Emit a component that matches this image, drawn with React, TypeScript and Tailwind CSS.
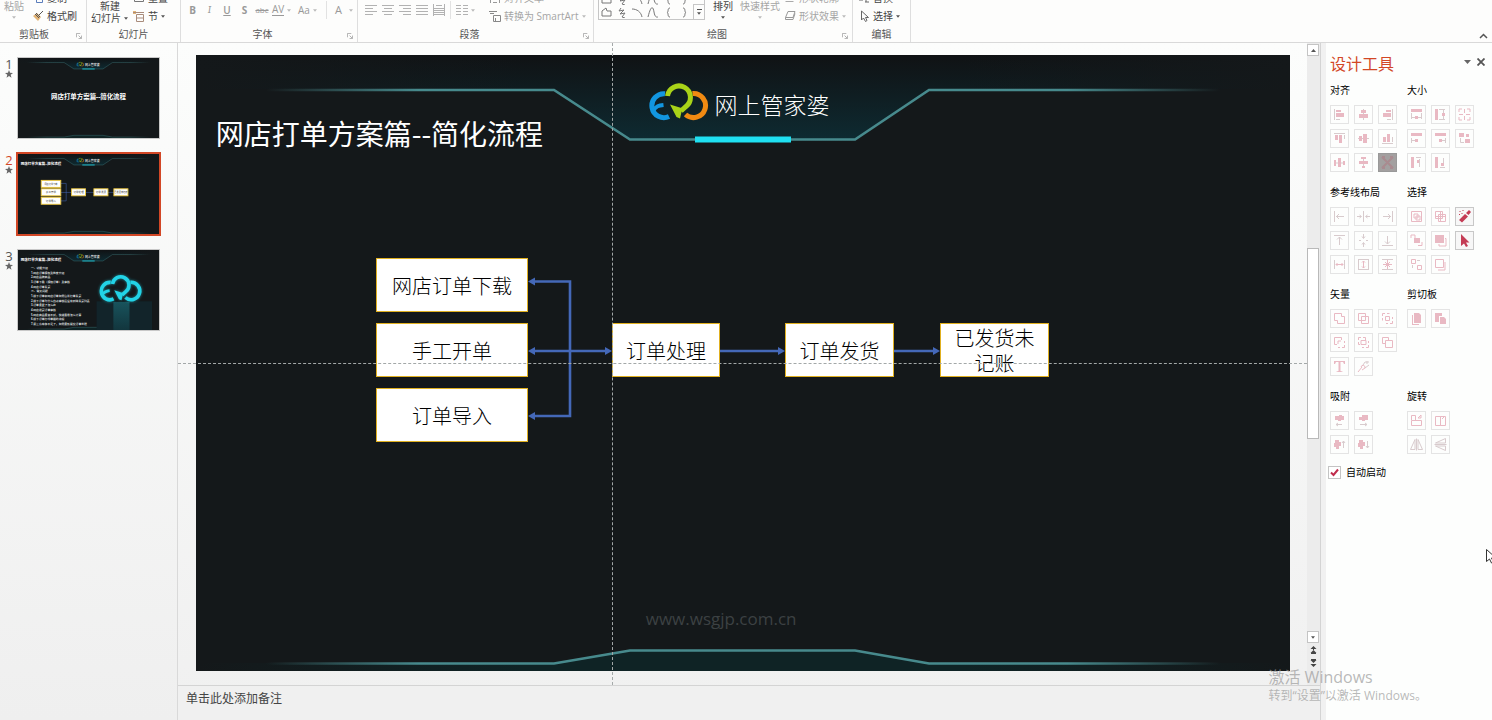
import type { ReactNode } from "react";

type Glyph = { fill?: string; line?: string; gray?: string; strong?: boolean; active?: boolean };
type Tool = { name: string; icon: Glyph };
type ToolSection = { title: string; narrow?: boolean; tools: Tool[] };

const SLIDE_W = 1094;
const SLIDE_H = 616;

const nodes = [
  { text: "网店订单下载", x: 180, y: 203, w: 152, h: 54 },
  { text: "手工开单", x: 180, y: 268, w: 152, h: 54 },
  { text: "订单导入", x: 180, y: 333, w: 152, h: 54 },
  { text: "订单处理", x: 416, y: 268, w: 108, h: 54 },
  { text: "订单发货", x: 589, y: 268, w: 109, h: 54 },
  { text: "已发货未记账", x: 744, y: 268, w: 109, h: 54 },
];

const outline = [
  "一、功能介绍",
  "1.网店订单授权及检查介绍",
  "2.网店品牌商品",
  "3.订单下载（授权订单）及审核",
  "4.网店订单发货",
  "二、常见问题",
  "1.线下订单和网店订单如何合并打单发货",
  "2.线下订单为什么自动审核后没有到待发货列表",
  "3.订单重复了怎么办",
  "4.网店退货订单审核",
  "5.网店商品重量不对，快递费用怎么计算",
  "6.线下订单打印单据的流程",
  "7.第三方库存不足了，如何重新提交订单处理",
];

const sections: ToolSection[] = [
  {
    title: "对齐",
    tools: [
      { name: "左对齐", icon: { fill: "M6 5h5v2H6zM6 8h8v4H6z", gray: "M4.5 4v11M6 14.5h4" } },
      { name: "水平居中", icon: { fill: "M7 5h5v3H7zM5 9h9v4H5z", gray: "M9.5 4v11" } },
      { name: "右对齐", icon: { fill: "M8 5h5v2H8zM5 8h8v4H5z", gray: "M14.5 4v11M9 14.5h4" } },
      { name: "顶端对齐", icon: { fill: "M5 6h3v5H5zM9 6h3v8H9z", gray: "M4 4.5h11M14.5 6v4" } },
      { name: "垂直居中", icon: { fill: "M5 7h3v5H5zM9 5h4v9H9z", gray: "M4 9.5h11" } },
      { name: "底端对齐", icon: { fill: "M5 8h3v5H5zM9 5h3v8H9z", gray: "M4 14.5h11M14.5 8v5" } },
      { name: "横向分布", icon: { fill: "M4 7h2v6H4zM8 5h3v9H8zM13 8h2v4h-2z", gray: "M6 10h7" } },
      { name: "纵向分布", icon: { fill: "M7 4h5v2H7zM5 8h9v3H5zM8 13h3v2H8z", gray: "M9.5 6v8" } },
      { name: "对齐基准", icon: { line: "M4 4l11 11M15 4L4 15M4 4h3M12 4h3M4 15h3M12 15h3", active: true } },
    ],
  },
  {
    title: "大小",
    tools: [
      { name: "等宽", icon: { fill: "M4 4h11v3H4zM8 11h3v3H8z", gray: "M4.5 8v6M14.5 8v6M5 12.5h9" } },
      { name: "等高", icon: { fill: "M4 4h3v11H4zM11 8h3v3h-3z", gray: "M8 4.5h6M8 14.5h6M12.5 5v9" } },
      { name: "等大小", icon: { line: "M4 7V4h3M12 4h3v3M15 12v3h-3M7 15H4v-3M9.5 4v4M9.5 11v4M4 9.5h4M11 9.5h4" } },
      { name: "左侧拉伸", icon: { fill: "M4 4h11v3H4zM8 10h3v3H8z", gray: "M4.5 9v5M5 11.5h5" } },
      { name: "右侧拉伸", icon: { fill: "M4 4h11v3H4zM8 10h3v3H8z", gray: "M14.5 9v5M9 11.5h5" } },
      { name: "互换", icon: { fill: "M4 4h5v4H4zM10 10h5v4h-5zM11 5h3v3h-3z", gray: "M5.5 9v4.5H9" } },
      { name: "顶部拉伸", icon: { fill: "M4 4h3v11H4zM10 7h2v3h-2z", gray: "M9 4.5h5M12.5 6v8" } },
      { name: "底部拉伸", icon: { fill: "M4 4h3v11H4zM10 10h3v3h-3z", gray: "M9 14.5h5M12.5 5v6" } },
    ],
  },
  {
    title: "参考线布局",
    tools: [
      { name: "左参考线", icon: { gray: "M4.5 4v11M6 9.5h8M9 7L6.5 9.5L9 12" } },
      { name: "垂直参考线", icon: { gray: "M9.5 4v11M3 9.5h4M12 9.5h4M5.5 8l2 1.5l-2 1.5M13.5 8l-2 1.5l2 1.5" } },
      { name: "右参考线", icon: { gray: "M14.5 4v11M5 9.5h8M10 7l2.5 2.5L10 12" } },
      { name: "上参考线", icon: { gray: "M4 4.5h11M9.5 6v8M7 8.5L9.5 6L12 8.5" } },
      { name: "水平参考线", icon: { gray: "M5 9.5h2M12 9.5h2M9.5 3v4M9.5 12v4M8 5.5l1.5 2l1.5-2M8 13.5l1.5-2l1.5 2" } },
      { name: "下参考线", icon: { gray: "M4 14.5h11M9.5 5v8M7 10.5l2.5 2.5l2.5-2.5" } },
      { name: "左右参考线", icon: { line: "M6 9.5h7M7.5 8L6 9.5L7.5 11M11.5 8L13 9.5L11.5 11", gray: "M4.5 5v9M14.5 5v9" } },
      { name: "上下参考线", icon: { line: "M9.5 6v7M8 7.5L9.5 6L11 7.5M8 11.5l1.5 1.5l1.5-1.5", gray: "M4 4.5h11M4 14.5h11M4.5 5v9M14.5 5v9" } },
      { name: "四周参考线", icon: { line: "M9.5 5v9M5 9.5h9M7 7l5 5M12 7l-5 5", gray: "M4 4.5h11M4 14.5h11" } },
    ],
  },
  {
    title: "选择",
    tools: [
      { name: "组合", icon: { line: "M4.5 4.5h10v10h-10zM7 7h4v4H7zM9 9h4v4H9z" } },
      { name: "取消组合", icon: { line: "M4.5 4.5h7v7h-7zM7.5 7.5h7v7h-7zM4 9.5h11M9.5 4v11" } },
      { name: "魔棒", icon: { fill: "M4 13l6-6l3 2.5l-6 6zM11 6l3-3l2 2l-2.5 3z", line: "M5 4v1M8 3v1M4 7.5h1M7 6v1", strong: true } },
      { name: "选择相同", icon: { fill: "M7 7h6v5H7z", line: "M4 7V4h4v3M11 14.5h4V11" } },
      { name: "置于顶层", icon: { fill: "M4 4h9v8H4z", line: "M14 7.5h1v7.5H8v-2" } },
      { name: "选择", icon: { fill: "M6 3v12l3-2.5l2 3.5l2-1l-2-3.5h3.5z", strong: true } },
      { name: "选择相似", icon: { line: "M4.5 4.5h4v4h-4zM10.5 10.5h4v4h-4z", gray: "M10 5.5h3M5.5 10v3" } },
      { name: "置于底层", icon: { line: "M4.5 4.5h8v8h-8zM14 7v8H7" } },
    ],
  },
  {
    title: "矢量",
    tools: [
      { name: "联合", icon: { line: "M4.5 4.5h7v3h3v7h-7v-3h-3z" } },
      { name: "组合形状", icon: { line: "M4.5 4.5h7v7h-7zM7.5 7.5h7v7h-7z" } },
      { name: "相交", icon: { line: "M7.5 7.5h4v4h-4zM4.5 7V4.5H7M9 4.5h2.5M4.5 9v2.5M14.5 12v2.5H12M14.5 8v2M8 14.5h2" } },
      { name: "剪除", icon: { line: "M7 11.5H4.5v-7h7V7M8 8h3M8 8v3M14.5 8v2M14.5 12v2.5H12M8 14.5h2" } },
      { name: "拆分", icon: { line: "M4.5 7V4.5H7M9 4.5h2.5V7M7 7.5h5v4H7zM4.5 9v2.5H6M14.5 8v2M14.5 12v2.5H12M8 14.5h2" } },
      { name: "重叠", icon: { line: "M7 10.5H4.5v-6h6V7M7.5 7.5h7v7h-7z" } },
      { name: "文字矢量", icon: { fill: "M4 4h11v3h-1l-1-2h-2.5v9l2 .5v.5h-6v-.5l2-.5V5H6L5 7H4z" } },
      { name: "编辑顶点", icon: { line: "M4 15l4-5M7 10a2 2 0 1 1 4 1l-3 2", gray: "M9 8l2-3h4M11 11l4-3M13 4v3" } },
    ],
  },
  {
    title: "剪切板",
    tools: [
      { name: "复制多个", icon: { fill: "M7 4h5l2 2v8H7zM5 6h1v9h6v1H5z" } },
      { name: "粘贴多个", icon: { fill: "M4 4h7v3H8v6H4zM9 8h4l2 2v5H9z" } },
    ],
  },
  {
    title: "吸附",
    narrow: true,
    tools: [
      { name: "向左吸附", icon: { fill: "M5 5h4v-1h3v1h2v4h-3v1H8V9H5z", gray: "M6 13.5h6M8 12l-2 1.5l2 1.5" } },
      { name: "向右吸附", icon: { fill: "M5 6h3V4h6v5h-3v1H8V9H5z", gray: "M6 13.5h7M11 12l2 1.5l-2 1.5" } },
      { name: "向上吸附", icon: { fill: "M5 5h4v2h2v4H9v3H6v-2H4V8h1z", gray: "M13.5 6v7M12 8l1.5-2L15 8" } },
      { name: "向下吸附", icon: { fill: "M5 5h4v2h2v4H9v3H6v-2H4V8h1z", gray: "M13.5 6v7M12 11l1.5 2l1.5-2" } },
    ],
  },
  {
    title: "旋转",
    narrow: true,
    tools: [
      { name: "向左旋转", icon: { line: "M4.5 9.5h10v5h-10zM4.5 9V4.5h4v5M11 7h3V4M11 7l3-3" } },
      { name: "向右旋转", icon: { line: "M4.5 5.5h5v9h-5zM9.5 5.5h5v9h-5zM11 8l3-3" } },
      { name: "水平翻转", icon: { gray: "M9.5 3.5v12M8 4.5L3.5 14.5H8zM11 4.5l4.5 10H11z" } },
      { name: "垂直翻转", icon: { gray: "M3.5 9.5h12M4.5 8l10-4.5V8zM4.5 11l10 4.5V11z" } },
    ],
  },
];

function Logo({ mono, x, y, width }: { mono?: boolean; x: number; y: number; width: number }) {
  const green = mono ? "#22d3e6" : "#a9d318";
  return (
    <svg x={x} y={y} width={width} height={(width * 38) / 61} viewBox="0 0 61 38" fill="none" strokeWidth="5">
      <g stroke={mono ? "#22d3e6" : "#1296e0"}>
        <path d="M16 10.7A12 12 0 1 0 20 33.500" />
        <path d="M4 28C7 23 10 22.500 14.500 22" strokeWidth="4" />
      </g>
      <g stroke={mono ? "#22d3e6" : "#f08a12"}>
        <path d="M43.500 10.600A12 12 0 1 1 36.500 31.500" />
      </g>
      <path d="M18.500 13A11.500 11.500 0 1 1 37 23.500L32 28" stroke={green} />
      <path d="M21 21.500L34 25.500L32.500 29L31 35.500L27.500 34z" fill={green} />
    </svg>
  );
}

function Backdrop({ id, brand, children }: { id: string; brand?: boolean; children?: ReactNode }) {
  return (
    <svg className="block h-full w-full" viewBox={`0 0 ${SLIDE_W} ${SLIDE_H}`} preserveAspectRatio="none" aria-hidden="true">
      <defs>
        <linearGradient id={`${id}-line`} gradientUnits="userSpaceOnUse" x1="70" x2="1024" y1="0" y2="0">
          <stop offset="0" stopColor="#4b8f92" stopOpacity="0" />
          <stop offset=".16" stopColor="#478a8d" />
          <stop offset=".84" stopColor="#478a8d" />
          <stop offset="1" stopColor="#4b8f92" stopOpacity="0" />
        </linearGradient>
        <linearGradient id={`${id}-glow`} x1="0" x2="0" y1="0" y2="1">
          <stop offset="0" stopColor="#101214" />
          <stop offset="1" stopColor="#0e2a31" />
        </linearGradient>
        <linearGradient id={`${id}-side`} x1="0" x2="1" y1="0" y2="0">
          <stop offset="0" stopColor="#14181a" />
          <stop offset=".3" stopColor="#14181a" stopOpacity="0" />
          <stop offset=".7" stopColor="#14181a" stopOpacity="0" />
          <stop offset="1" stopColor="#14181a" />
        </linearGradient>
      </defs>
      <rect width={SLIDE_W} height={SLIDE_H} fill="#14181a" />
      <path d="M0 0H1094V34H733L659 84H434L358 34H0z" fill={`url(#${id}-glow)`} />
      <path d="M0 616V608H358L434 595H659L733 608H1094V616z" fill="#0f2325" />
      <path d="M0 0H1094V90H0zM0 590H1094V616H0z" fill={`url(#${id}-side)`} />
      <g fill="none" stroke={`url(#${id}-line)`} strokeWidth="2.600">
        <path d="M70 35H358L434 84.500H659L733 35H1024" />
        <path d="M70 608.500H358L434 595.500H659L733 608.500H1024" />
      </g>
      <rect x="499" y="81.500" width="96" height="6" fill="#1fe0f2" />
      <Logo x={453} y={28} width={61} />
      {brand && (
        <text x="519" y="58" fontSize="23" fill="#fff">
          网上管家婆
        </text>
      )}
      {children}
    </svg>
  );
}

function Connectors({ thick }: { thick?: boolean }) {
  return (
    <g stroke="#4468b8" strokeWidth={thick ? 4 : 2.6} fill="none">
      <path d="M339 226.500H374V361H339M339 296H410M524 296H583M698 296H738" />
      <path
        stroke="none"
        fill="#4468b8"
        d="M332 226.500l7-4v8zM332 361l7-4v8zM332 296l7-4v8zM416 296l-7-4v8zM589 296l-7-4v8zM744 296l-7-4v8z"
      />
    </g>
  );
}

function ThumbTitle() {
  return (
    <text x="22" y="88" fontSize="27" fontWeight="700" fill="#fff">
      网店打单方案篇--简化流程
    </text>
  );
}

function ThumbContent({ index }: { index: number }) {
  if (index === 1) {
    return (
      <Backdrop id="thumb1" brand>
        <text x="547" y="318" fontSize="50" fontWeight="700" fill="#fff" textAnchor="middle">
          网店打单方案篇--简化流程
        </text>
      </Backdrop>
    );
  }
  if (index === 2) {
    return (
      <Backdrop id="thumb2" brand>
        <ThumbTitle />
        <Connectors thick />
        {nodes.map((node) => (
          <g key={node.text}>
            <rect x={node.x} y={node.y} width={node.w} height={node.h} fill="#fff" stroke="#f0c93c" strokeWidth="7" />
            <text x={node.x + node.w / 2} y={node.y + 35} fontSize={node.text.length > 4 ? 17 : 20} fill="#333" textAnchor="middle">
              {node.text}
            </text>
          </g>
        ))}
      </Backdrop>
    );
  }
  return (
    <Backdrop id="thumb3" brand>
      <defs>
        <linearGradient id="beam" x1="0" x2="0" y1="0" y2="1">
          <stop offset="0" stopColor="#1a5f69" />
          <stop offset="1" stopColor="#123a42" />
        </linearGradient>
        <filter id="neon" x="-20%" y="-20%" width="140%" height="140%">
          <feGaussianBlur stdDeviation="14" />
        </filter>
      </defs>
      <ThumbTitle />
      <rect x="610" y="395" width="430" height="221" fill="#12242a" />
      <rect x="740" y="400" width="125" height="216" fill="url(#beam)" opacity=".8" />
      <g filter="url(#neon)" opacity=".6">
        <Logo mono x={630} y={190} width={340} />
      </g>
      <Logo mono x={630} y={190} width={340} />
      {outline.map((line, i) => (
        <text key={line} x="100" y={146 + i * 36} fontSize="22" fontWeight="700" fill="#d5dadb">
          {line}
        </text>
      ))}
    </Backdrop>
  );
}

function Thumbnail({ index }: { index: number }) {
  const selected = index === 2;
  return (
    <li className="flex pb-4">
      <div className={`w-[18px] shrink-0 text-center text-[13px] leading-3 ${selected ? "text-[#d24726]" : "text-[#555]"}`}>
        <span>{index}</span>
        <svg viewBox="0 0 10 10" className="mx-auto h-[8px] w-[8px] fill-[#666]" aria-hidden="true">
          <path d="M5 0L6.300 3.400L10 3.600L7.100 6L8.100 9.600L5 7.500L1.900 9.600L2.900 6L0 3.600L3.700 3.400z" />
        </svg>
      </div>
      <button
        type="button"
        aria-label={`幻灯片 ${index}`}
        className={`block h-[80px] w-[141px] shrink-0 ${selected ? "outline-2 outline-[#d24726]" : "outline-1 outline-[#c8c8c8]"}`}
      >
        <ThumbContent index={index} />
      </button>
    </li>
  );
}

function Group({ label, width, launcher, children }: { label: string; width: string; launcher?: boolean; children: ReactNode }) {
  return (
    <section className={`relative flex shrink-0 flex-col justify-end border-r border-[#dedede] ${width}`}>
      <div className="flex items-end">{children}</div>
      <h2 className="h-[17px] text-center text-[10px] leading-[18px] text-[#555]">{label}</h2>
      {launcher && (
        <svg viewBox="0 0 7 7" className="absolute right-[4px] bottom-[3px] h-[6px] w-[6px]" fill="none" stroke="#a5a5a5" aria-hidden="true">
          <path d="M.5 5V.5H5M3 3l3 3M6.5 3v3.5H3" />
        </svg>
      )}
    </section>
  );
}

function Caret({ light }: { light?: boolean }) {
  return (
    <svg viewBox="0 0 5 3" className={`h-[3px] w-[4px] shrink-0 ${light ? "fill-[#bbb]" : "fill-[#555]"}`} aria-hidden="true">
      <path d="M0 0h5L2.5 3z" />
    </svg>
  );
}

function Row({ children, light }: { children: ReactNode; light?: boolean }) {
  return (
    <button type="button" className={`flex h-[18px] items-center gap-[3px] text-[10px] whitespace-nowrap ${light ? "text-[#a5a5a5]" : "text-[#444]"}`}>
      {children}
    </button>
  );
}

function SmallIcon({ d, color, fill }: { d: string; color: string; fill?: string }) {
  return (
    <svg viewBox="0 0 12 12" className="h-[12px] w-[12px] shrink-0" fill="none" stroke={color} aria-hidden="true">
      {fill && <path d={fill} fill="#e3b577" stroke="none" />}
      <path d={d} />
    </svg>
  );
}

const paragraphIcons = [
  { name: "左对齐", d: "M0 1.5h12M0 4.5h8M0 7.5h12M0 10.5h8" },
  { name: "居中", d: "M0 1.5h12M2 4.5h8M0 7.5h12M2 10.5h8" },
  { name: "右对齐", d: "M0 1.5h12M4 4.5h8M0 7.5h12M4 10.5h8" },
  { name: "两端对齐", d: "M0 1.5h12M0 4.5h12M0 7.5h12M0 10.5h12" },
  { name: "分散对齐", d: "M.5 0v12M11.5 0v12M0 4.5h12M0 6.5h12M0 8.5h12M0 10.5h12M3 1.5h6" },
];

const shapes = [
  "M1 9V4l4-3l1 3h4v5z",
  "M4 1l-2 3l5-1l-4 4l5-1l-3 4l3 1",
  "M0 2c5 0 9 3 10 8",
  "M0 10C3-2 5-1 6 5S9 10 10 10",
  "M7 1C4 1 6 5 4 5.5C6 6 4 10 7 10",
  "M4 1C7 1 5 5 7 5.5C5 6 7 10 4 10",
];

function Ribbon() {
  return (
    <header className="relative flex h-[43px] shrink-0 overflow-hidden border-b border-[#d9d9d9] bg-[#fdfdfc]">
      <Group label="剪贴板" width="w-[87px] pr-[18px]" launcher>
        <button type="button" className="mb-[6px] ml-[4px] flex w-[22px] flex-col items-center gap-[4px] text-[10px] leading-3 whitespace-nowrap text-[#a5a5a5]">
          粘贴
          <Caret light />
        </button>
        <div className="ml-[8px]">
          <Row>
            <SmallIcon d="M1.5 .5h5v7h-5zM4.5 3.5h6v7h-6z" color="#5b7dbb" />
            复制
          </Row>
          <Row>
            <SmallIcon d="M7 5l4-4M3 4l4 4M4 3l4 4" color="#555" fill="M1 6l4-3l4 4l-3 4z" />
            格式刷
          </Row>
        </div>
      </Group>
      <Group label="幻灯片" width="w-[94px]">
        <button type="button" className="mb-[1px] ml-[4px] w-[38px] text-[10px] leading-3 text-[#444]">
          新建
          <span className="flex items-center gap-[3px] whitespace-nowrap">
            幻灯片
            <Caret />
          </span>
        </button>
        <div className="ml-[4px]">
          <Row>
            <SmallIcon d="M1.5 1.5h9v8h-9z" color="#777" />
            重置
          </Row>
          <Row>
            <SmallIcon d="M3.5 4.5h7v7h-7zM4 8h7M0 2.5h11" color="#a98c7c" fill="M0 1h3v3H0z" />
            节
            <Caret />
          </Row>
        </div>
      </Group>
      <Group label="字体" width="w-[177px] pr-[13px]" launcher>
        <div className="mb-[6px] ml-[3px] flex h-[18px] items-center text-[10px] text-[#999]">
          <button type="button" className="w-[17px] font-bold">B</button>
          <button type="button" className="w-[17px] font-serif italic">I</button>
          <button type="button" className="w-[18px] font-semibold underline">U</button>
          <button type="button" className="w-[17px] font-bold">S</button>
          <button type="button" className="w-[18px] text-[8px] line-through">abc</button>
          <button type="button" className="ml-[1px] flex w-[22px] items-center gap-[3px]">
            <span className="border-b border-[#999] leading-[11px]">AV</span>
            <Caret light />
          </button>
          <button type="button" className="ml-[4px] flex w-[28px] items-center gap-[3px]">
            Aa
            <Caret light />
          </button>
          <span className="h-[18px] w-px bg-[#e2e2e2]" />
          <button type="button" className="ml-[8px] flex items-center gap-[7px] text-[11px]">
            A
            <Caret light />
          </button>
        </div>
      </Group>
      <Group label="段落" width="w-[236px] pr-[12px]" launcher>
        <div className="mb-[6px] ml-[7px] flex h-[18px] shrink-0 items-center gap-[5px]">
          {paragraphIcons.map((icon) => (
            <button type="button" key={icon.name} aria-label={icon.name}>
              <SmallIcon d={icon.d} color="#b2b2b2" />
            </button>
          ))}
          <span className="h-[18px] w-px bg-[#e2e2e2]" />
          <button type="button" aria-label="分栏" className="flex items-center gap-[3px]">
            <SmallIcon d="M0 1.5h5M7 1.5h5M0 4.5h5M7 4.5h5M0 7.5h5M7 7.5h5M0 10.5h5M7 10.5h5" color="#b2b2b2" />
            <Caret light />
          </button>
        </div>
        <div className="ml-[14px]">
          <Row light>
            <SmallIcon d="M1.5 3v8M4 10.5h4M10.5 3v8" color="#999" />
            对齐文本
          </Row>
          <Row light>
            <SmallIcon d="M0 1.5h8M1 3.5h4M4.5 5.5h7v6h-7zM6.5 8v4" color="#888" />
            转换为 SmartArt
            <Caret light />
          </Row>
        </div>
      </Group>
      <Group label="绘图" width="w-[259px] pr-[12px]" launcher>
        <div className="mb-[5px] ml-[4px] flex h-[34px] w-[107px] shrink-0 items-end border border-[#c6c6c6]">
          <div className="grid grow grid-cols-6 gap-y-[2px] pb-px pl-px">
            {[...shapes, ...shapes].map((d, i) => (
              <svg key={i} viewBox="0 0 11 11" className="h-[11px] w-[13px]" fill="none" stroke="#777" aria-hidden="true">
                <path d={d} />
              </svg>
            ))}
          </div>
          <button type="button" aria-label="其他形状" className="flex h-[15px] w-[11px] flex-col items-center justify-center gap-[2px] border-t border-l border-[#c6c6c6]">
            <span className="h-px w-[5px] bg-[#555]" />
            <Caret />
          </button>
        </div>
        <button type="button" className="mb-[6px] ml-[8px] flex flex-col items-center gap-[4px] text-[10px] leading-3 whitespace-nowrap text-[#444]">
          排列
          <Caret />
        </button>
        <button type="button" className="mb-[6px] ml-[7px] flex flex-col items-center gap-[4px] text-[10px] leading-3 whitespace-nowrap text-[#a5a5a5]">
          快速样式
          <Caret light />
        </button>
        <div className="ml-[4px]">
          <Row light>
            <SmallIcon d="M1.5 9.5h8" color="#aaa" />
            形状轮廓
          </Row>
          <Row light>
            <SmallIcon d="M4 1.5h7l-2 6H1.5zM1.5 7.500v2h7.500l2-6" color="#999" />
            形状效果
            <Caret light />
          </Row>
        </div>
      </Group>
      <Group label="编辑" width="w-[58px]">
        <div className="ml-[5px]">
          <Row>
            <SmallIcon d="M1 8h4M7 10h4M8 5v5" color="#666" />
            替换
          </Row>
          <Row>
            <SmallIcon d="M3.5 1v9l2-2l2 3.5l1.5-1l-1.5-3h3z" color="#666" />
            选择
            <Caret />
          </Row>
        </div>
      </Group>
      <button type="button" aria-label="折叠功能区" className="absolute right-[4px] bottom-[3px]">
        <svg viewBox="0 0 9 6" className="h-[6px] w-[9px]" fill="none" stroke="#555" strokeWidth="1.5" aria-hidden="true">
          <path d="M1 5l3.5-3.5L8 5" />
        </svg>
      </button>
    </header>
  );
}

function Slide() {
  return (
    <div className="relative aspect-[1094/616] w-full">
      <Backdrop id="main">
        <Connectors />
      </Backdrop>
      <p className="absolute top-[6%] left-[47.4%] text-[23px] leading-[27px] font-light whitespace-nowrap text-white">网上管家婆</p>
      <h1 className="absolute top-[9.7%] left-[1.8%] font-['Noto_Sans_CJK_SC',sans-serif] text-[28px] leading-9 whitespace-nowrap text-white">
        网店打单方案篇--简化流程
      </h1>
      {nodes.map((node) => (
        <div
          key={node.text}
          className="absolute flex items-center justify-center border border-[#e0b020] bg-white px-[10px] pt-[2px] text-center text-[20px] leading-[25px] font-light text-black"
          style={{
            left: `${(node.x / SLIDE_W) * 100}%`,
            top: `${(node.y / SLIDE_H) * 100}%`,
            width: `${(node.w / SLIDE_W) * 100}%`,
            height: `${(node.h / SLIDE_H) * 100}%`,
          }}
        >
          {node.text}
        </div>
      ))}
      <p className="absolute bottom-[6.5%] left-0 w-[96%] text-center text-[17px] leading-6 text-[#3c4143]">www.wsgjp.com.cn</p>
    </div>
  );
}

function Scrollbar() {
  return (
    <div className="flex w-[13px] shrink-0 flex-col items-center bg-[#ececec] pt-px pr-px pb-[18px]">
      <button type="button" aria-label="向上滚动" className="flex h-[12px] w-[12px] shrink-0 items-center justify-center border border-[#c4c4c4] bg-white">
        <svg viewBox="0 0 5 3" className="h-[3px] w-[5px] fill-[#555]" aria-hidden="true">
          <path d="M0 3h5L2.5 0z" />
        </svg>
      </button>
      <div className="flex w-full grow flex-col">
        <div className="grow" />
        <div className="h-[191px] w-full border border-[#b9b9b9] bg-white" />
        <div className="grow" />
      </div>
      <button type="button" aria-label="向下滚动" className="flex h-[12px] w-[12px] shrink-0 items-center justify-center border border-[#c4c4c4] bg-white">
        <Caret />
      </button>
      <button type="button" aria-label="上一张幻灯片" className="mt-[3px]">
        <svg viewBox="0 0 7 8" className="h-[8px] w-[7px] fill-[#444]" aria-hidden="true">
          <path d="M3.5 0L6.5 3H4V4H3V3H.5zM3.5 4L6.5 7H.5zM1 7h5v1H1z" />
        </svg>
      </button>
      <button type="button" aria-label="下一张幻灯片" className="mt-[5px]">
        <svg viewBox="0 0 7 8" className="h-[8px] w-[7px] fill-[#444]" aria-hidden="true">
          <path d="M1 0h5v1H1zM.5 1h6l-3 3zM.5 5h6l-3 3z" />
        </svg>
      </button>
    </div>
  );
}

function ToolButton({ tool }: { tool: Tool }) {
  const { fill, line, gray, strong, active } = tool.icon;
  const color = strong ? "#c43c55" : active ? "#a98b90" : "#e9b9c3";
  return (
    <button
      type="button"
      aria-label={tool.name}
      className={`h-[19px] w-[19px] border ${active ? "border-[#999] bg-[#a3a0a0]" : strong ? "border-[#c8c8c8] bg-[#f7f7f7]" : "border-[#e4e4e4]"}`}
    >
      <svg viewBox="1 1 17 17" className="block h-[17px] w-[17px]" fill="none" aria-hidden="true">
        {gray && <path d={gray} stroke="#d8cbcd" />}
        {fill && <path d={fill} fill={color} />}
        {line && <path d={line} stroke={color} strokeWidth={active ? 2 : 1} />}
      </svg>
    </button>
  );
}

function DesignPanel() {
  return (
    <aside className="w-[172px] shrink-0 border-l border-[#d4d4d4] bg-[#f1f1f1] pl-[5px]">
      <div className="h-full bg-[#fdfefd] pl-[4px]">
        <div className="flex h-[39px] items-center justify-between pt-[3px] pr-[7px]">
          <h2 className="text-[16px] text-[#d24726]">设计工具</h2>
          <div className="flex items-center gap-[6px] pb-[4px]">
            <button type="button" aria-label="任务窗格选项">
              <svg viewBox="0 0 7 4" className="h-[4px] w-[7px] fill-[#666]" aria-hidden="true">
                <path d="M0 0h7L3.5 4z" />
              </svg>
            </button>
            <button type="button" aria-label="关闭">
              <svg viewBox="0 0 8 8" className="h-[8px] w-[8px]" stroke="#555" strokeWidth="1.8" aria-hidden="true">
                <path d="M.5 .5l7 7M7.5 .5l-7 7" />
              </svg>
            </button>
          </div>
        </div>
        <div className="grid grid-cols-[77px_1fr] gap-y-[12px]">
          {sections.map((section) => (
            <section key={section.title}>
              <h3 className="mb-[7px] text-[10px] leading-4 text-black">{section.title}</h3>
              <div className={`grid gap-[5px] ${section.narrow ? "grid-cols-[repeat(2,19px)]" : "grid-cols-[repeat(3,19px)]"}`}>
                {section.tools.map((tool) => (
                  <ToolButton key={tool.name} tool={tool} />
                ))}
              </div>
            </section>
          ))}
        </div>
        <label className="mt-[10px] -ml-[2px] flex items-center gap-[5px] text-[10px] leading-4 text-black">
          <span className="relative flex h-[13px] w-[13px]">
            <input type="checkbox" defaultChecked className="peer h-[13px] w-[13px] appearance-none border border-[#c4c4c4] bg-white" />
            <svg viewBox="0 0 13 13" className="pointer-events-none absolute inset-0 hidden peer-checked:block" fill="none" stroke="#c02c4c" strokeWidth="2" aria-hidden="true">
              <path d="M3 6.5L5.5 9L10 3.5" />
            </svg>
          </span>
          自动启动
        </label>
      </div>
    </aside>
  );
}

export default function App() {
  return (
    <div className="relative flex h-screen flex-col overflow-hidden bg-[#f3f4f4] font-['Open_Sans','Noto_Sans_CJK_SC',sans-serif]">
      <Ribbon />
      <div className="flex min-h-0 grow">
        <nav aria-label="幻灯片" className="w-[178px] shrink-0 border-r border-[#d9d9d9] bg-linear-to-b from-[#fcfdfc] to-[#efefef] pt-[15px]">
          <ol>
            {[1, 2, 3].map((index) => (
              <Thumbnail key={index} index={index} />
            ))}
          </ol>
        </nav>
        <main className="flex min-w-0 grow flex-col bg-linear-to-b from-[#fcfdfc] to-[#f0f0f0]">
          <div className="flex min-h-0 grow">
            <div className="relative grow pt-[12px] pr-[17px] pl-[18px]">
              <Slide />
              <div className="absolute top-0 bottom-0 left-[38.4%] border-l border-dashed border-[#a3a8a8]" />
              <div className="absolute top-[49.9%] right-0 left-0 border-t border-dashed border-[#a3a8a8]" />
            </div>
            <Scrollbar />
          </div>
          <textarea
            aria-label="备注"
            defaultValue="单击此处添加备注"
            className="block h-[35px] w-full shrink-0 resize-none border-t border-[#d4d4d4] bg-[#f0f0f0] px-[8px] py-[4px] text-[12px] leading-[18px] text-[#444]"
          />
        </main>
        <DesignPanel />
      </div>
      <div className="pointer-events-none absolute right-[65px] bottom-[16px] text-[#9a9a9a]/70">
        <p className="text-[16px] leading-[22px]">激活 Windows</p>
        <p className="text-[12px] leading-4 whitespace-nowrap">转到“设置”以激活 Windows。</p>
      </div>
      <svg viewBox="0 0 10 16" className="pointer-events-none absolute -right-[4px] bottom-[155px] h-[16px] w-[10px]" fill="#fff" stroke="#333" aria-hidden="true">
        <path d="M.5 .5v12l3-2.5l2 4l2-1l-2-4H10z" />
      </svg>
    </div>
  );
}
